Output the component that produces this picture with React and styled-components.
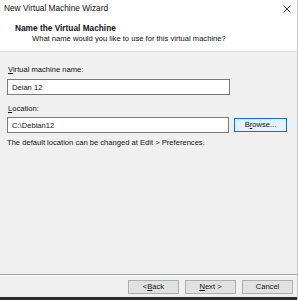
import React from "react";
import styled, { createGlobalStyle } from "styled-components";

const Global = createGlobalStyle`
  html, body { margin: 0; padding: 0; background: #f0f0f0; }
  body { font-family: "Liberation Sans", Arial, sans-serif; }
`;

const Window = styled.div`
  width: 298px;
  height: 300px;
  display: flex;
  flex-direction: column;
  background: #f0f0f0;
  box-sizing: border-box;
  border-right: 1px solid #c8c8c8;
  font-size: 7.6px;
  color: #111;
  overflow: hidden;
`;

const TitleBar = styled.div`
  height: 17px;
  flex: none;
  background: #fff;
  display: flex;
  align-items: center;
  justify-content: space-between;
  padding: 0 6px 0 4px;
`;

const TitleText = styled.span`
  font-size: 8.3px;
  line-height: 1;
`;

const CloseIcon = styled.svg`
  width: 8px;
  height: 8px;
  display: block;
`;

const Header = styled.div`
  flex: none;
  height: 35px;
  background: #fff;
  border-bottom: 1px solid #dedede;
  padding: 6px 0 0 15px;
  box-sizing: border-box;
`;

const HeaderTitle = styled.div`
  font-weight: bold;
  font-size: 8.3px;
  line-height: 11px;
`;

const HeaderSub = styled.div`
  padding-left: 17px;
  line-height: 10px;
`;

const Body = styled.div`
  flex: 1;
  padding: 13px 8px 0 7px;
  display: flex;
  flex-direction: column;
`;

const Label = styled.div`
  line-height: 10px;
  padding-left: 1px;
  margin-top: ${(p) => p.$mt || 0}px;
  margin-bottom: ${(p) => p.$mb || 4}px;
`;

const U = styled.span`
  text-decoration: underline;
  text-underline-offset: 1px;
`;

const Input = styled.div`
  height: 16px;
  box-sizing: border-box;
  width: ${(p) => p.$w}px;
  background: #fff;
  border: 1px solid #7a7a7a;
  padding: 0 4px;
  display: flex;
  align-items: center;
`;

const Row = styled.div`
  display: flex;
  align-items: center;
  gap: 5px;
`;

const Button = styled.div`
  height: 14px;
  width: ${(p) => p.$w || 51}px;
  box-sizing: border-box;
  background: ${(p) => (p.$focus ? "#e5f1fb" : "#e1e1e1")};
  border: 1px solid ${(p) => (p.$focus ? "#0078d7" : "#adadad")};
  display: flex;
  align-items: center;
  justify-content: center;
  line-height: 1;
`;

const Help = styled.div`
  margin-top: 5px;
  line-height: 10px;
`;

const Spacer = styled.div`
  flex: 1;
`;

const Footer = styled.div`
  flex: none;
  border-top: 1px solid #a0a0a0;
  box-shadow: inset 0 1px 0 #fff;
  height: 23px;
  box-sizing: border-box;
  padding: 5px 4px 0 0;
  display: flex;
  justify-content: flex-end;
  gap: 6px;
`;

const TaskStrip = styled.div`
  flex: none;
  height: 3px;
  background: #2b2b2b;
`;

export default function App() {
  return (
    <>
      <Global />
      <Window>
        <TitleBar>
          <TitleText>New Virtual Machine Wizard</TitleText>
          <CloseIcon viewBox="0 0 8 8">
            <path d="M0.5 0.5 L7.5 7.5 M7.5 0.5 L0.5 7.5" stroke="#333" strokeWidth="0.9" fill="none" />
          </CloseIcon>
        </TitleBar>
        <Header>
          <HeaderTitle>Name the Virtual Machine</HeaderTitle>
          <HeaderSub>What name would you like to use for this virtual machine?</HeaderSub>
        </Header>
        <Body>
          <Label>
            <U>V</U>irtual machine name:
          </Label>
          <Input $w={223}>Deian 12</Input>
          <Label $mt={9} $mb={3}>
            <U>L</U>ocation:
          </Label>
          <Row>
            <Input $w={222}>C:\Debian12</Input>
            <Button $focus $w={53}>
              B<U>r</U>owse...
            </Button>
          </Row>
          <Help>The default location can be changed at Edit &gt; Preferences.</Help>
          <Spacer />
        </Body>
        <Footer>
          <Button>
            &lt; <U>B</U>ack
          </Button>
          <Button>
            <U>N</U>ext &gt;
          </Button>
          <Button>Cancel</Button>
        </Footer>
        <TaskStrip />
      </Window>
    </>
  );
}
